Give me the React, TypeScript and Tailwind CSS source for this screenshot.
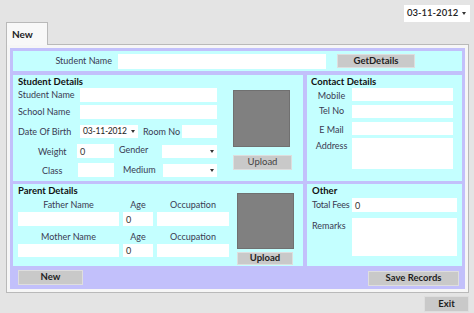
import React from 'react';

const Field = ({ w, h, value }: { w: number; h: number; value?: string }) => (
  <div
    className="bg-white shrink-0 pl-[3px] text-[9px] leading-none flex items-center text-[#333]"
    style={{ width: w, height: h }}
  >
    {value}
  </div>
);

const Arrow = () => (
  <svg width="4" height="3" viewBox="0 0 4 3" className="shrink-0">
    <path d="M0 0 H4 L2 3 Z" fill="#333" />
  </svg>
);

const Select = ({ w, h, value }: { w: number; h: number; value?: string }) => (
  <div
    className="bg-white shrink-0 pl-[3px] pr-[3px] flex items-center justify-between text-[8.5px] tracking-[-0.2px] text-[#222]"
    style={{ width: w, height: h }}
  >
    <span>{value}</span>
    <Arrow />
  </div>
);

const Button = ({
  w,
  h,
  bold = true,
  children,
}: {
  w: number;
  h: number;
  bold?: boolean;
  children: React.ReactNode;
}) => (
  <div
    className={`shrink-0 bg-[#c9c9c9] border border-[#dedede] flex items-center justify-center text-[9.5px] ${
      bold ? 'font-bold text-[#1e1e1e]' : 'text-[#444]'
    }`}
    style={{ width: w, height: h }}
  >
    {children}
  </div>
);

const Header = ({ children }: { children: React.ReactNode }) => (
  <div className="h-[13px] leading-[13px] font-bold text-[9.5px] text-[#111]">{children}</div>
);

export default function App() {
  return (
    <div className="w-[474px] h-[313px] overflow-hidden whitespace-nowrap bg-[#e4e4e4] font-[Lato,'Liberation_Sans',sans-serif] text-[9px] text-[#3a3a52]">
      {/* date picker */}
      <div className="h-[22px] flex justify-end pt-[5px] pr-[4px]">
        <div className="w-[66px] h-[17px] bg-white flex items-center justify-between pl-[3px] pr-[4px] font-semibold text-[9.5px] text-[#222]">
          <span>03-11-2012</span>
          <Arrow />
        </div>
      </div>

      {/* tab */}
      <div className="h-[22px] pl-[6px] flex relative z-10">
        <div className="w-[42px] h-[23px] bg-[#f8f8f8] border border-b-0 border-[#b9b9b9] pl-[5px] pt-[4px] font-bold text-[10px] text-[#222]">
          New
        </div>
      </div>

      {/* panel */}
      <div className="ml-[6px] w-[463px] h-[249px] bg-[#f6f6f6] border border-[#b9b9b9] p-[3px]">
        <div className="h-full bg-[#c2c0fb] p-[3px] flex flex-col">
          {/* top row */}
          <div className="h-[20px] bg-[#c4ffff] flex items-center">
            <div className="w-[99px] text-right">Student Name</div>
            <div className="ml-[6px]">
              <Field w={208} h={15} />
            </div>
            <div className="ml-[11px]">
              <Button w={78} h={14}>GetDetails</Button>
            </div>
          </div>

          {/* student / contact */}
          <div className="mt-[4px] h-[106px] flex gap-[4px]">
            <div className="w-[290px] bg-[#c4ffff] flex">
              <div className="w-[220px] pl-[5px] flex flex-col">
                <Header>Student Details</Header>
                <div className="h-[14px] flex items-center">
                  <div className="w-[62px]">Student Name</div>
                  <Field w={137} h={14} />
                </div>
                <div className="mt-[3px] h-[14px] flex items-center">
                  <div className="w-[62px]">School Name</div>
                  <Field w={137} h={14} />
                </div>
                <div className="mt-[6px] h-[13px] flex items-center">
                  <div className="w-[62px]">Date Of Birth</div>
                  <Select w={58} h={13} value="03-11-2012" />
                  <div className="ml-[5px] w-[39px]">Room No</div>
                  <Field w={35} h={13} />
                </div>
                <div className="mt-[6px] h-[14px] flex items-center">
                  <div className="w-[59px] pl-[20px] pt-[2px]">Weight</div>
                  <Field w={37} h={14} value="0" />
                  <div className="ml-[5px] w-[43px] pb-[2px]">Gender</div>
                  <Select w={55} h={13} />
                </div>
                <div className="mt-[5px] h-[14px] flex items-center">
                  <div className="w-[60px] pl-[24px] pt-[2px]">Class</div>
                  <Field w={36} h={14} />
                  <div className="ml-[9px] w-[40px]">Medium</div>
                  <Select w={54} h={13} />
                </div>
              </div>
              <div className="pt-[15px] flex flex-col">
                <div className="w-[57px] h-[57px] bg-[#808080] border border-[#707070]" />
                <div className="mt-[8px]">
                  <Button w={59} h={15} bold={false}>Upload</Button>
                </div>
              </div>
            </div>

            <div className="w-[155px] bg-[#c4ffff] pl-[4px] flex flex-col">
              <Header>Contact Details</Header>
              <div className="h-[13px] flex items-center">
                <div className="w-[41px] text-center pt-[3px]">Mobile</div>
                <Field w={101} h={13} />
              </div>
              <div className="mt-[4px] h-[13px] flex items-center">
                <div className="w-[41px] text-center pb-[2px]">Tel No</div>
                <Field w={101} h={13} />
              </div>
              <div className="mt-[4px] h-[13px] flex items-center">
                <div className="w-[41px] text-center pt-[3px]">E Mail</div>
                <Field w={101} h={13} />
              </div>
              <div className="mt-[3px] flex items-start">
                <div className="w-[41px] text-center pt-[1px]">Address</div>
                <Field w={101} h={31} />
              </div>
            </div>
          </div>

          {/* parent / other */}
          <div className="mt-[3px] h-[82px] flex gap-[4px]">
            <div className="w-[290px] bg-[#c4ffff] flex">
              <div className="w-[224px] pl-[5px] flex flex-col">
                <Header>Parent Details</Header>
                <div className="mt-[1px] h-[14px] flex items-center gap-[4px] text-center">
                  <div className="w-[101px]">Father Name</div>
                  <div className="w-[30px]">Age</div>
                  <div className="w-[72px]">Occupation</div>
                </div>
                <div className="h-[14px] flex gap-[4px]">
                  <Field w={101} h={14} />
                  <Field w={30} h={14} value="0" />
                  <Field w={72} h={14} />
                </div>
                <div className="mt-[4px] h-[14px] flex items-center gap-[4px] text-center">
                  <div className="w-[101px]">Mother Name</div>
                  <div className="w-[30px]">Age</div>
                  <div className="w-[72px]">Occupation</div>
                </div>
                <div className="h-[13px] flex gap-[4px]">
                  <Field w={101} h={13} />
                  <Field w={30} h={13} value="0" />
                  <Field w={72} h={13} />
                </div>
              </div>
              <div className="pt-[9px] flex flex-col">
                <div className="w-[57px] h-[56px] bg-[#808080] border border-[#707070]" />
                <div className="mt-[3px]">
                  <Button w={56} h={13}>Upload</Button>
                </div>
              </div>
            </div>

            <div className="w-[155px] bg-[#c4ffff] pl-[5px] flex flex-col">
              <Header>Other</Header>
              <div className="mt-[1px] h-[14px] flex items-center">
                <div className="w-[40px] tracking-[-0.2px]">Total Fees</div>
                <Field w={105} h={14} value="0" />
              </div>
              <div className="mt-[6px] flex items-start">
                <div className="w-[40px] pt-[1px]">Remarks</div>
                <Field w={105} h={38} />
              </div>
            </div>
          </div>

          {/* bottom buttons */}
          <div className="flex-1 flex justify-between items-start pt-[4px] pl-[5px] pr-[3px]">
            <Button w={65} h={15}>New</Button>
            <div className="mt-[1px]">
              <Button w={91} h={15}>Save Records</Button>
            </div>
          </div>
        </div>
      </div>

      {/* exit */}
      <div className="flex justify-end pt-[3px] pr-[5px]">
        <Button w={45} h={16}>Exit</Button>
      </div>
    </div>
  );
}
